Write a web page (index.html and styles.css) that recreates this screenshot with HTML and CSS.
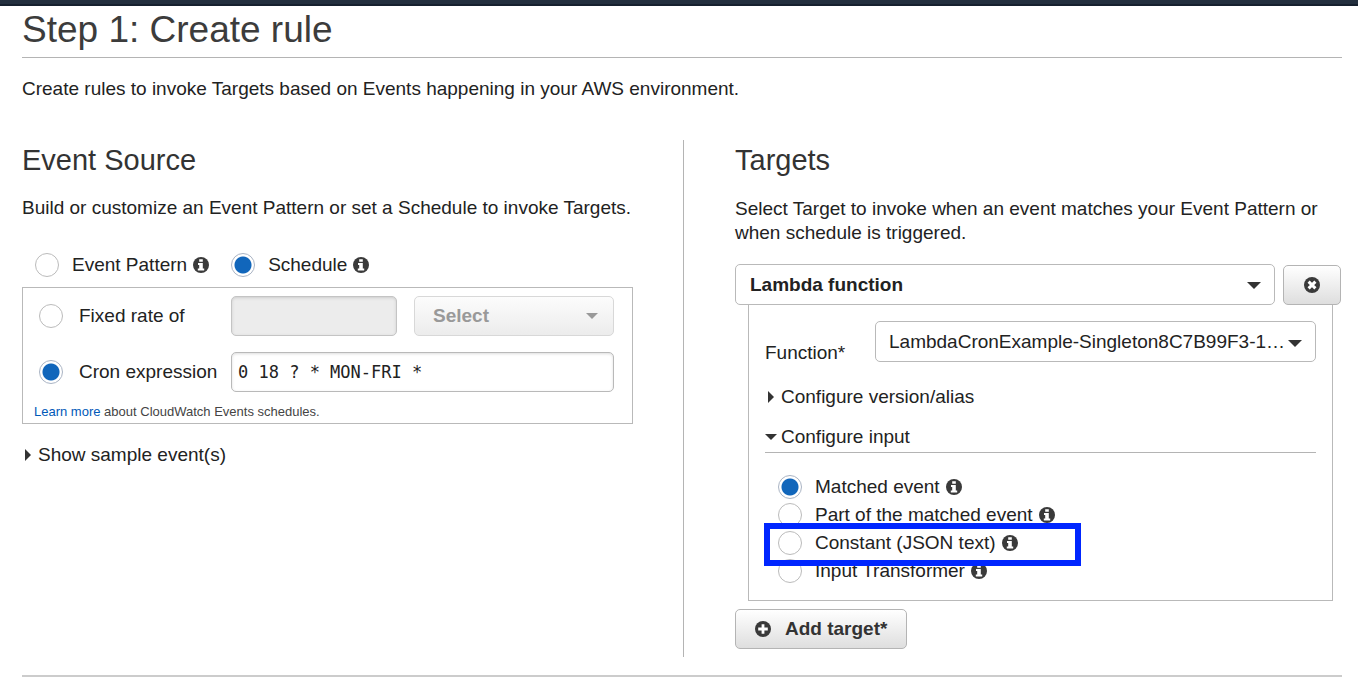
FILE: index.html
```html
<!DOCTYPE html>
<html lang="en">
<head>
<meta charset="utf-8">
<title>Step 1: Create rule</title>
<link rel="stylesheet" href="styles.css">
</head>
<body>
<svg class="symbols" aria-hidden="true">
  <symbol id="info" viewBox="0 0 16 16"><circle cx="8" cy="8" r="8" fill="#3a3a3a"/><path fill="#fff" d="M6.2 2.2h3.6v2.6H6.2zM5 6h4.8v5.4h1.4v2.2H4.8v-2.2h1.4V8H5z"/></symbol>
  <symbol id="plus" viewBox="0 0 16 16"><circle cx="8" cy="8" r="8" fill="#3a3a3a"/><path fill="#fff" d="M6.6 3.2h2.8v3.4h3.4v2.8H9.4v3.4H6.6V9.4H3.2V6.6h3.4z"/></symbol>
  <symbol id="cross" viewBox="0 0 16 16"><circle cx="8" cy="8" r="8" fill="#3a3a3a"/><path fill="none" stroke="#fff" stroke-width="3" d="M4.6 4.6l6.8 6.8M11.4 4.6l-6.8 6.8"/></symbol>
</svg>
<header class="topbar"></header>
<main class="page">
  <h1 class="title">Step 1: Create rule</h1>
  <p class="intro">Create rules to invoke Targets based on Events happening in your AWS environment.</p>
  <div class="columns">
    <section class="source">
      <h2 class="heading">Event Source</h2>
      <p class="lead">Build or customize an Event Pattern or set a Schedule to invoke Targets.</p>
      <div class="modes">
        <label class="choice"><input class="radio" type="radio" name="mode">Event Pattern <svg class="icon"><use href="#info"/></svg></label>
        <label class="choice"><input class="radio" type="radio" name="mode" checked>Schedule <svg class="icon"><use href="#info"/></svg></label>
      </div>
      <div class="schedule">
        <div class="schedule-row">
          <label class="choice"><input class="radio" type="radio" name="schedule">Fixed rate of</label>
          <div class="rate">
            <input class="field" type="text" aria-label="Rate" disabled>
            <span class="dropdown dropdown-disabled"><select class="select" aria-label="Rate unit" disabled><option>Select</option></select></span>
          </div>
        </div>
        <div class="schedule-row">
          <label class="choice"><input class="radio" type="radio" name="schedule" checked>Cron expression</label>
          <input class="field cron" type="text" aria-label="Cron expression value" value="0 18 ? * MON-FRI *">
        </div>
        <p class="hint"><a class="link" href="#">Learn more</a> about CloudWatch Events schedules.</p>
      </div>
      <button class="toggle sample" type="button"><span class="caret"></span>Show sample event(s)</button>
    </section>
    <section class="targets">
      <h2 class="heading">Targets</h2>
      <p class="lead target-lead">Select Target to invoke when an event matches your Event Pattern or when schedule is triggered.</p>
      <div class="target-head">
        <span class="dropdown target-type"><select class="select" aria-label="Target type"><option>Lambda function</option></select></span>
        <button class="button remove" type="button" aria-label="Remove target"><svg class="icon"><use href="#cross"/></svg></button>
      </div>
      <div class="target-body">
        <div class="function-row">
          <label class="function-label" for="function">Function*</label>
          <span class="dropdown function"><select class="select" id="function"><option>LambdaCronExample-Singleton8C7B99F3-1…</option></select></span>
        </div>
        <button class="toggle version" type="button"><span class="caret"></span>Configure version/alias</button>
        <button class="toggle input-toggle" type="button"><span class="caret caret-open"></span>Configure input</button>
        <div class="inputs">
          <label class="choice"><input class="radio" type="radio" name="input" checked>Matched event <svg class="icon"><use href="#info"/></svg></label>
          <label class="choice"><input class="radio" type="radio" name="input">Part of the matched event <svg class="icon"><use href="#info"/></svg></label>
          <label class="choice marked"><input class="radio" type="radio" name="input">Constant (JSON text) <svg class="icon"><use href="#info"/></svg></label>
          <label class="choice"><input class="radio" type="radio" name="input">Input Transformer <svg class="icon"><use href="#info"/></svg></label>
        </div>
      </div>
      <button class="button add" type="button"><svg class="icon"><use href="#plus"/></svg>Add target*</button>
    </section>
  </div>
</main>
</body>
</html>
```
FILE: styles.css
```css
*, *::before, *::after { box-sizing: border-box; }
body { margin: 0; background: #fff; color: #222; font: 19px/24px "Liberation Sans", Arial, sans-serif; }
h1, h2, p { margin: 0; }
button, input, select { font: inherit; color: inherit; margin: 0; }
.symbols { position: absolute; width: 0; height: 0; }

.topbar { height: 6px; background: #232f3e; border-bottom: 2px solid #16202e; }
.page { padding: 0 16px 0 22px; }
.title { height: 52px; border-bottom: 1px solid #b4b4b4; color: #3c3c3c; font-size: 37px; line-height: 48px; font-weight: 400; }
.intro { padding: 19px 0 39px; }
.columns { display: grid; grid-template-columns: 661fr 659fr; padding-bottom: 18px; border-bottom: 2px solid #ccc; }
.source { padding-right: 50px; }
.targets { padding: 0 0 8px 51px; border-left: 1px solid #b4b4b4; }
.heading { color: #333; font-size: 29px; line-height: 40px; font-weight: 400; }
.lead { padding-top: 16px; }
.target-lead { padding-top: 17px; }

.choice { display: flex; align-items: center; }
.radio { appearance: none; flex: none; width: 24px; height: 24px; margin-right: 13px; border: 1px solid #bbb; border-radius: 50%; background: #fff; }
.radio:checked { background: radial-gradient(circle, #1166bb 8px, #fff 9px); border-color: #aab4c4; }
.icon { flex: none; width: 16px; height: 16px; margin-left: 6px; }
.modes { display: flex; gap: 22px; padding: 33px 0 10px 13px; }

.schedule { padding: 8px 18px 0 16px; border: 1px solid #b9b9b9; }
.schedule-row { display: grid; grid-template-columns: 192px 1fr; align-items: center; margin-bottom: 16px; }
.schedule-row .radio { margin-right: 16px; }
.rate { display: grid; grid-template-columns: 166px 1fr; gap: 17px; }
.field { width: 100%; height: 40px; padding: 0 6px; border: 1px solid #b9b9b9; border-radius: 5px; background: #fff; box-shadow: inset 0 1px 3px #ddd; }
.field:disabled { background: #ececec; box-shadow: inset 0 1px 3px #ccc; border-color: #c4c4c4; }
.cron { font: 17px "DejaVu Sans Mono", monospace; }
.hint { margin: -6px 0 0 -5px; color: #444; font-size: 13px; line-height: 19px; padding-bottom: 2px; }
.link { color: #0059b8; text-decoration: none; }

.dropdown { position: relative; display: block; }
.dropdown::after { content: ""; position: absolute; right: 14px; top: 50%; margin-top: -3px; border: 7px solid transparent; border-top-color: #333; border-bottom: 0; pointer-events: none; }
.select { appearance: none; display: block; width: 100%; height: 41px; padding: 0 28px 0 14px; border: 1px solid #b9b9b9; border-radius: 5px; background: #fff; }
.function .select { padding-left: 13px; }
.dropdown-disabled .select { height: 40px; padding-left: 18px; border-color: #d8d8d8; background: linear-gradient(#fcfcfc, #ececec); color: #999; opacity: 1; font-weight: 700; }
.dropdown-disabled::after { right: 16px; border-width: 6px 6px 0; border-top-color: #999; }

.toggle { display: flex; align-items: center; padding: 0; border: 0; background: none; text-align: left; }
.caret { width: 16px; flex: none; }
.caret::before { content: ""; display: block; width: 0; margin-left: 3px; border: 6px solid transparent; border-left-color: #333; border-right: 0; }
.caret-open::before { margin-left: 0; border: 6px solid transparent; border-top-color: #333; border-bottom: 0; }
.sample { margin-top: 19px; }

.target-head { display: grid; grid-template-columns: 1fr 58px; gap: 8px; align-items: end; padding: 19px 1px 0 0; }
.target-type .select { font-weight: 700; }
.button { display: flex; align-items: center; justify-content: center; height: 40px; padding: 0 19px; border: 1px solid #b4b4b4; border-radius: 5px; background: linear-gradient(#fff, #dedede); color: #333; font-weight: 700; }
.button .icon { margin-left: 0; }
.add { gap: 14px; margin-top: 8px; }
.remove { padding: 0; }
.target-body { margin: 0 9px 0 13px; padding: 16px 16px 17px; border: 1px solid #b9b9b9; border-top: 0; }
.function-row { display: grid; grid-template-columns: 110px 1fr; }
.function-label { padding-top: 20px; }
.version { margin-top: 20px; }
.input-toggle { width: 100%; margin-top: 16px; padding-bottom: 3px; border-bottom: 1px solid #b4b4b4; }
.inputs { display: grid; gap: 4px; padding: 22px 0 0 13px; }
.marked { position: relative; }
.marked::after { content: ""; position: absolute; left: -14px; top: -8px; width: 317px; height: 43px; border: 6px solid #0026ff; pointer-events: none; }
```
